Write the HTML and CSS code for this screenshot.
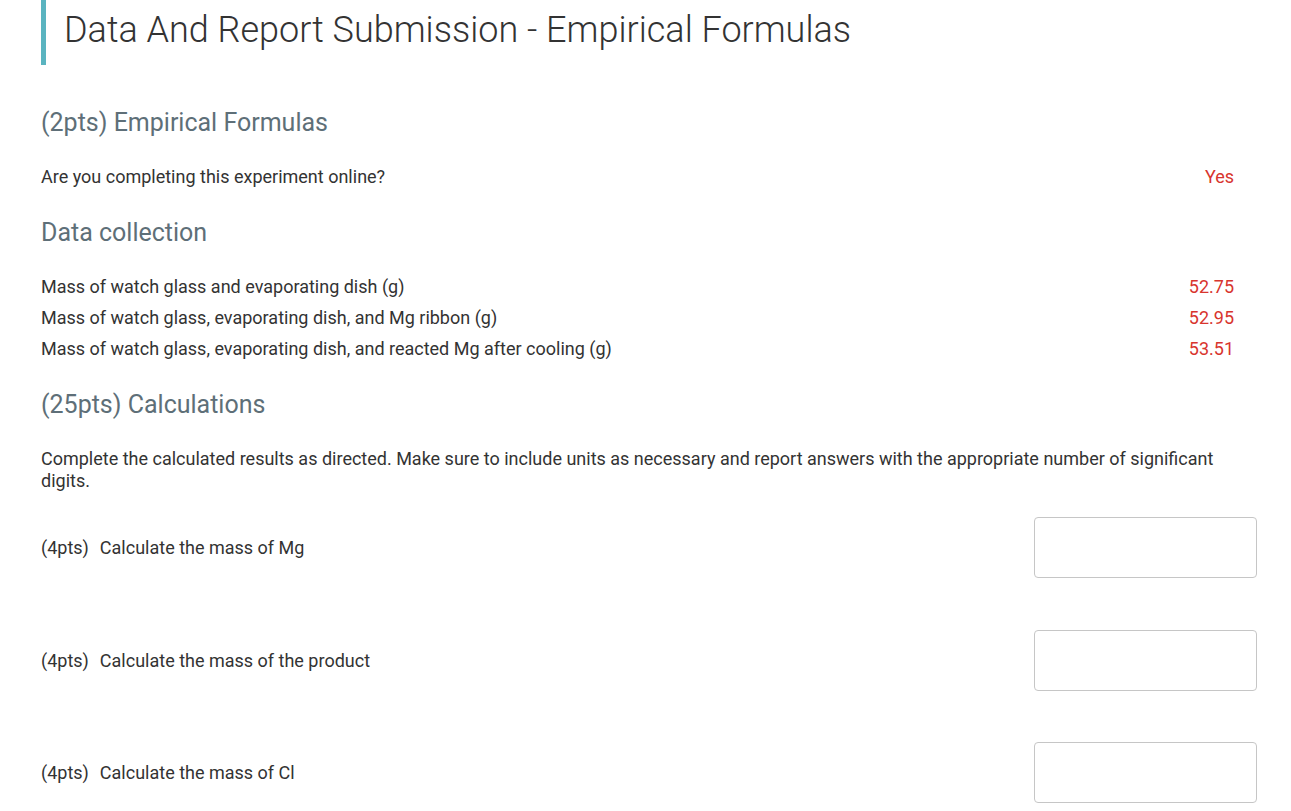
FILE: index.html
```html
<!DOCTYPE html>
<html lang="en">
<head>
  <meta charset="UTF-8">
  <meta name="viewport" content="width=device-width, initial-scale=1.0">
  <title>Data And Report Submission - Empirical Formulas</title>
  <link rel="stylesheet" href="styles.css">
</head>
<body>
  <div class="page">
    <div class="page-title">
      <h1>Data And Report Submission - Empirical Formulas</h1>
    </div>

    <h2 class="section-title first">(2pts) Empirical Formulas</h2>
    <div class="answer-row">
      <span class="label">Are you completing this experiment online?</span>
      <span class="value">Yes</span>
    </div>

    <h2 class="section-title">Data collection</h2>
    <div class="data-table">
      <div class="data-row">
        <span class="label">Mass of watch glass and evaporating dish (g)</span>
        <span class="value">52.75</span>
      </div>
      <div class="data-row">
        <span class="label">Mass of watch glass, evaporating dish, and Mg ribbon (g)</span>
        <span class="value">52.95</span>
      </div>
      <div class="data-row">
        <span class="label">Mass of watch glass, evaporating dish, and reacted Mg after cooling (g)</span>
        <span class="value">53.51</span>
      </div>
    </div>

    <h2 class="section-title calc">(25pts) Calculations</h2>
    <p class="directions">Complete the calculated results as directed. Make sure to include units as necessary and report answers with the appropriate number of significant digits.</p>

    <div class="question">
      <label class="question-text"><span class="pts">(4pts)</span>Calculate the mass of Mg</label>
      <input type="text" class="answer-box">
    </div>
    <div class="question">
      <label class="question-text"><span class="pts">(4pts)</span>Calculate the mass of the product</label>
      <input type="text" class="answer-box">
    </div>
    <div class="question">
      <label class="question-text"><span class="pts">(4pts)</span>Calculate the mass of Cl</label>
      <input type="text" class="answer-box">
    </div>
  </div>
</body>
</html>
```

FILE: styles.css
```css
body {
  margin: 0;
  font-family: Roboto, "Liberation Sans", Arial, sans-serif;
  font-size: 18px;
  color: #333;
  background-color: #fff;
}

.page {
  padding: 0 34px 0 41px;
}

.page-title {
  height: 65px;
  border-left: 5px solid #5ab4c0;
  padding-left: 18px;
  box-sizing: border-box;
  padding-top: 10px;
}

.page-title h1 {
  margin: 0;
  font-size: 36px;
  font-weight: 300;
  line-height: 40px;
  color: #333;
}

.section-title {
  margin: 29px 0 0;
  font-size: 25px;
  font-weight: 400;
  line-height: 32px;
  color: #5e6f78;
}

.section-title.first {
  margin-top: 42px;
}

.section-title.calc {
  margin-top: 25px;
}

.answer-row,
.data-row {
  display: flex;
  justify-content: space-between;
  padding-right: 23px;
}

.answer-row {
  margin-top: 27px;
  line-height: 22px;
}

.data-table {
  margin-top: 22px;
}

.data-row {
  line-height: 31px;
}

.value {
  color: #d8352e;
}

.directions {
  margin: 27px 23px 0 0;
  line-height: 22px;
}

.question {
  display: flex;
  align-items: center;
  justify-content: space-between;
  margin-top: 25px;
  margin-bottom: 51.5px;
}

.question + .question {
  margin-top: 0;
}

.question:last-child {
  margin-bottom: 0;
}

.question-text .pts {
  margin-right: 11px;
}

.answer-box {
  width: 223px;
  height: 61px;
  box-sizing: border-box;
  border: 1px solid #c6c6c6;
  border-radius: 4px;
  padding: 6px 10px;
  font-family: inherit;
  font-size: 16px;
}
```
